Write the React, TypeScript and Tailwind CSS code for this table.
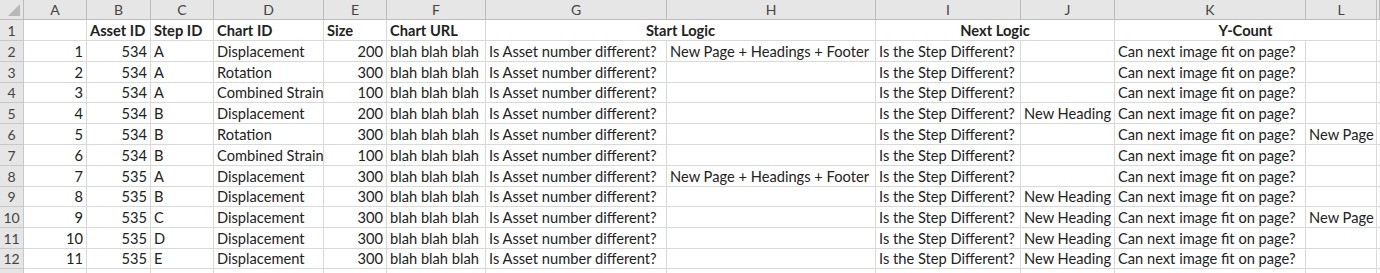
import React from "react";

const COLS =
  "grid grid-cols-[24px_63px_64px_63px_110px_63px_99px_181px_209px_145px_94px_191px_71px_1fr]";

type Row = {
  n: number;
  asset: number;
  step: string;
  chart: string;
  size: number;
  h: string;
  j: string;
  l: string;
};

const rows: Row[] = [
  { n: 1, asset: 534, step: "A", chart: "Displacement", size: 200, h: "New Page + Headings + Footer", j: "", l: "" },
  { n: 2, asset: 534, step: "A", chart: "Rotation", size: 300, h: "", j: "", l: "" },
  { n: 3, asset: 534, step: "A", chart: "Combined Strain", size: 100, h: "", j: "", l: "" },
  { n: 4, asset: 534, step: "B", chart: "Displacement", size: 200, h: "", j: "New Heading", l: "" },
  { n: 5, asset: 534, step: "B", chart: "Rotation", size: 300, h: "", j: "", l: "New Page" },
  { n: 6, asset: 534, step: "B", chart: "Combined Strain", size: 100, h: "", j: "", l: "" },
  { n: 7, asset: 535, step: "A", chart: "Displacement", size: 300, h: "New Page + Headings + Footer", j: "", l: "" },
  { n: 8, asset: 535, step: "B", chart: "Displacement", size: 300, h: "", j: "New Heading", l: "" },
  { n: 9, asset: 535, step: "C", chart: "Displacement", size: 300, h: "", j: "New Heading", l: "New Page" },
  { n: 10, asset: 535, step: "D", chart: "Displacement", size: 300, h: "", j: "New Heading", l: "" },
  { n: 11, asset: 535, step: "E", chart: "Displacement", size: 300, h: "", j: "New Heading", l: "" },
];

const rowHeights = [
  "h-[21px]",
  "h-[21px]",
  "h-[21px]",
  "h-[20px]",
  "h-[21px]",
  "h-[21px]",
  "h-[21px]",
  "h-[21px]",
  "h-[20px]",
  "h-[21px]",
  "h-[21px]",
  "h-[20px]",
];

const cell =
  "border-r border-b border-[#d9d9d9] flex items-end pb-0 overflow-hidden whitespace-nowrap";
const L = cell + " pl-[3px]";
const R = cell + " justify-end pr-[3px]";
const C = cell + " justify-center";
const RH =
  "border-r border-b border-[#c8c8c8] bg-[#e6e6e6] text-[#444] flex items-end justify-center pb-0 text-[14px]";

export default function App() {
  const letters = ["A", "B", "C", "D", "E", "F", "G", "H", "I", "J", "K", "L", ""];
  return (
    <div
      className="w-[1380px] h-[273px] overflow-hidden bg-white text-[#222] text-[14.67px] leading-[18px]"
      style={{ fontFamily: "Lato, 'Noto Sans', sans-serif" }}
    >
      {/* column header */}
      <div className={COLS + " h-[20px]"}>
        <div className="border-r border-b border-[#bcbcbc] bg-[#e6e6e6] relative">
          <svg className="absolute right-[3px] bottom-[3px]" width="12" height="12" viewBox="0 0 12 12">
            <polygon points="12,0 12,12 0,12" fill="#b8b8b8" />
          </svg>
        </div>
        {letters.map((l, i) => (
          <div
            key={i}
            className="border-r border-b border-[#bcbcbc] bg-[#e6e6e6] text-[#444] flex items-center justify-center text-[14px]"
          >
            {l}
          </div>
        ))}
      </div>

      {/* row 1 */}
      <div className={COLS + " " + rowHeights[0] + " font-bold"}>
        <div className={RH + " font-normal"}>1</div>
        <div className={L}></div>
        <div className={L}>Asset ID</div>
        <div className={L}>Step ID</div>
        <div className={L}>Chart ID</div>
        <div className={L}>Size</div>
        <div className={L}>Chart URL</div>
        <div className={C + " col-span-2"}>Start Logic</div>
        <div className={C + " col-span-2"}>Next Logic</div>
        <div className={C + " col-span-2"}>Y-Count</div>
        <div className={L}></div>
      </div>

      {rows.map((r, idx) => (
        <div key={r.n} className={COLS + " " + rowHeights[idx + 1]}>
          <div className={RH}>{r.n + 1}</div>
          <div className={R}>{r.n}</div>
          <div className={R}>{r.asset}</div>
          <div className={L}>{r.step}</div>
          <div className={L}>{r.chart}</div>
          <div className={R}>{r.size}</div>
          <div className={L}>blah blah blah</div>
          <div className={L}>Is Asset number different?</div>
          <div className={L}>{r.h}</div>
          <div className={L}>Is the Step Different?</div>
          <div className={L}>{r.j}</div>
          <div className={L}>Can next image fit on page?</div>
          <div className={L}>{r.l}</div>
          <div className={L}></div>
        </div>
      ))}

      {/* partial row 13 */}
      <div className={COLS + " h-[21px]"}>
        <div className="border-r border-b border-[#c8c8c8] bg-[#e6e6e6]"></div>
        {letters.map((_, i) => (
          <div key={i} className={L}></div>
        ))}
      </div>
    </div>
  );
}
